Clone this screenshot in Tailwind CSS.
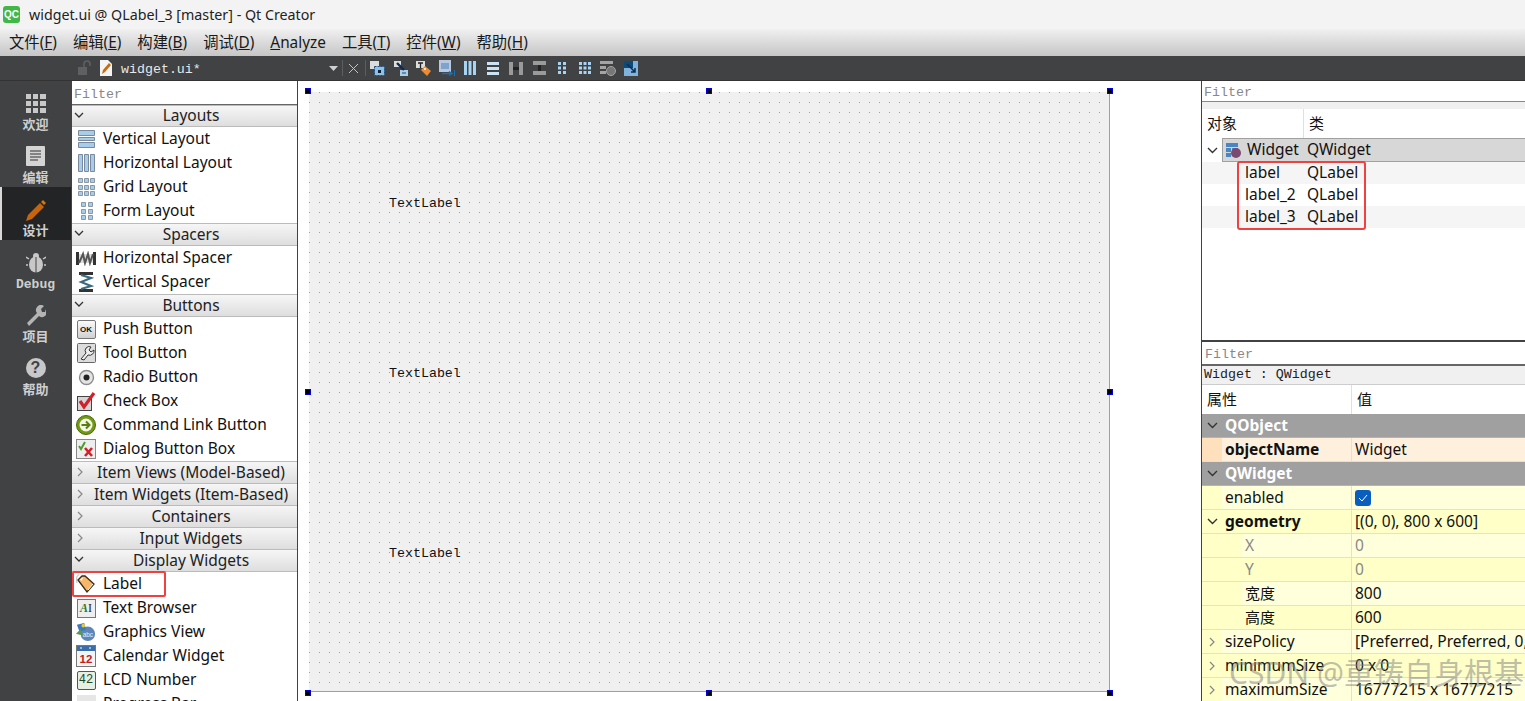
<!DOCTYPE html>
<html lang="zh-CN">
<head>
  <meta charset="UTF-8" />
  <title>widget.ui @ QLabel_3 [master] - Qt Creator</title>
  <script src="https://cdn.jsdelivr.net/npm/@tailwindcss/browser@4"></script>
</head>
<body class="h-[701px] overflow-hidden bg-white font-['Noto_Sans','Noto_Sans_CJK_SC',sans-serif] text-[15.5px] text-[#111]">

  <!-- Title bar -->
  <header class="h-[29px] bg-[#f3f3f3] flex items-center pl-[3px] gap-[9px] text-[14.25px] text-[#222]">
    <div class="w-[17px] h-[17px] rounded-[3px] bg-[#41b649] text-white text-[10px] font-bold leading-[17px] text-center font-['Liberation_Sans',sans-serif]">QC</div>
    <span>widget.ui @ QLabel_3 [master] - Qt Creator</span>
  </header>

  <!-- Menu -->
  <nav class="h-[27px] bg-gradient-to-b from-[#f0f0f0] to-[#c6c6c6] flex items-center pl-[1px] text-[15.35px] text-[#1a1a1a]">
    <span class="px-2">文件(<u>F</u>)</span>
    <span class="px-2">编辑(<u>E</u>)</span>
    <span class="px-2">构建(<u>B</u>)</span>
    <span class="px-2">调试(<u>D</u>)</span>
    <span class="px-2"><u>A</u>nalyze</span>
    <span class="px-2">工具(<u>T</u>)</span>
    <span class="px-2">控件(<u>W</u>)</span>
    <span class="px-2">帮助(<u>H</u>)</span>
  </nav>

  <!-- Editor toolbar -->
  <div class="h-[25px] bg-[#404244] flex items-center pl-[72px] border-b border-[#333]">
    <svg class="w-[14px] h-[16px] ml-[5px]" viewBox="0 0 14 16"><rect x="1" y="7" width="9" height="8" fill="#5e6062"/><path d="M7 7V4a3 3 0 0 1 6 0v2" fill="none" stroke="#5e6062" stroke-width="1.6"/></svg>
    <svg class="w-[14px] h-[18px] ml-[8px]" viewBox="0 0 14 18"><path d="M1 1h8l4 4v12H1z" fill="#f4f4f4"/><path d="M3 15l1-4 6-7 2 2-6 7z" fill="#c96a12"/></svg>
    <span class="ml-[8px] w-[208px] pt-[3px] font-['Liberation_Mono',monospace] text-[13.3px] text-[#e8e8e8]">widget.ui*</span>
    <svg class="w-[9px] h-[5px]" viewBox="0 0 9 5"><path d="M0 0h9L4.500 5z" fill="#d0d0d0"/></svg>
    <div class="w-px h-[16px] bg-[#5c5e60] ml-[4px]"></div>
    <svg class="w-[11px] h-[11px] ml-[5px]" viewBox="0 0 11 11"><path d="M1 1l9 9M10 1l-9 9" stroke="#c4c4c4" stroke-width="1"/></svg>
    <div class="w-px h-[16px] bg-[#5c5e60] ml-[6px]"></div>
    <svg class="w-[15px] h-[15px] ml-[4px]" viewBox="0 0 15 15"><rect x="0" y="0" width="9" height="8" fill="#dcdcdc"/><rect x="4.500" y="5.500" width="10" height="9" fill="#8fc0e8" stroke="#1c4d80" stroke-dasharray="2 1"/><rect x="8" y="9" width="3" height="3" fill="#123"/></svg>
    <svg class="w-[14px] h-[15px] ml-[9px]" viewBox="0 0 14 15"><rect x="0" y="0" width="7" height="6" fill="#dcdcdc"/><rect x="6" y="9" width="8" height="6" fill="#a9cdea"/><path d="M3 2l7 7" stroke="#0c2c55" stroke-width="2.400"/><path d="M8 12h4" stroke="#345"/></svg>
    <svg class="w-[15px] h-[15px] ml-[8px]" viewBox="0 0 15 15"><rect x="0" y="0" width="9" height="7" fill="#dcdcdc"/><path d="M2 2h5M4.500 2v5" stroke="#222" stroke-width="1.300"/><path d="M5 9l4-4 6 5-4 5z" fill="#f08a32"/><circle cx="9" cy="8" r="1" fill="#fff"/></svg>
    <svg class="w-[16px] h-[16px] ml-[8px]" viewBox="0 0 16 16"><rect x="0" y="0" width="12" height="12" fill="#b9c8dc"/><rect x="2" y="3" width="8" height="6" fill="#7ea3cc"/><path d="M3 13.500h9M10 11.500l3 2-3 2" stroke="#1d6fb5" stroke-width="1.400" fill="none"/><path d="M15.500 10v6" stroke="#1d6fb5"/></svg>
    <svg class="w-[12px] h-[14px] ml-[9px]" viewBox="0 0 12 14"><path d="M0 0h3v14H0zM4.500 0h3v14h-3zM9 0h3v14H9z" fill="#a8d4f4"/></svg>
    <svg class="w-[12px] h-[13px] ml-[11px]" viewBox="0 0 12 13"><path d="M0 0h12v3H0zM0 5h12v3H0zM0 10h12v3H0z" fill="#c9e2f5"/></svg>
    <svg class="w-[14px] h-[13px] ml-[10px]" viewBox="0 0 14 13"><path d="M0 0h4v13H0zM10 0h4v13h-4z" fill="#9a9a9a"/><path d="M4 6.500h6" stroke="#222" stroke-width="3"/></svg>
    <svg class="w-[13px] h-[14px] ml-[10px]" viewBox="0 0 13 14"><path d="M0 0h13v4H0zM0 10h13v4H0z" fill="#9a9a9a"/><path d="M6.500 4v6" stroke="#222" stroke-width="3"/></svg>
    <svg class="w-[8px] h-[12px] ml-[12px]" viewBox="0 0 8 12"><path d="M0 0h3v3H0zM5 0h3v3H5zM0 4.500h3v3H0zM5 4.500h3v3H5zM0 9h3v3H0zM5 9h3v3H5z" fill="#a8d4f4"/></svg>
    <svg class="w-[12px] h-[12px] ml-[13px]" viewBox="0 0 12 12"><path d="M0 0h3v3H0zM4.500 0h3v3h-3zM9 0h3v3H9zM0 4.500h3v3H0zM4.500 4.500h3v3h-3zM9 4.500h3v3H9zM0 9h3v3H0zM4.500 9h3v3h-3zM9 9h3v3H9z" fill="#a8d4f4"/></svg>
    <svg class="w-[16px] h-[16px] ml-[9px]" viewBox="0 0 16 16"><path d="M0 1h13v3H0zM0 6h6v3H0zM0 11h6v3H0z" fill="#a4a4a4"/><circle cx="11" cy="11" r="4.500" fill="#777" stroke="#a4a4a4"/></svg>
    <svg class="w-[14px] h-[15px] ml-[8px]" viewBox="0 0 14 15"><rect width="14" height="15" fill="#7fb2dc"/><rect width="9" height="7" fill="#0e4a78"/><path d="M3 3l8 8M11 7v4H7" stroke="#0b2c50" stroke-width="1.500" fill="none"/></svg>
  </div>

  <div class="flex h-[620px]">

    <!-- Mode selector -->
    <aside class="w-[71px] shrink-0 bg-[#404244] flex flex-col text-[#cfcfcf] text-[13px] font-bold leading-[16px] text-center">
      <div class="h-[53px] flex flex-col items-center justify-end pb-[2px]">
        <svg class="w-[20px] h-[19px] mb-[3px]" viewBox="0 0 20 19"><path d="M0 0h5v5H0zM7 0h5v5H7zM14 0h6v5h-6zM0 7h5v5H0zM7 7h5v5H7zM14 7h6v5h-6zM0 14h5v5H0zM7 14h5v5H7zM14 14h6v5h-6z" fill="#c8c8c8"/></svg>
        <span>欢迎</span>
      </div>
      <div class="h-[53px] flex flex-col items-center justify-end pb-[2px]">
        <svg class="w-[19px] h-[20px] mb-[3px]" viewBox="0 0 19 20"><rect width="19" height="20" rx="1" fill="#d4d4d4"/><path d="M4 5h11M4 8h11M4 11h11M4 14h8" stroke="#333"/></svg>
        <span>编辑</span>
      </div>
      <div class="h-[53px] bg-[#222425] border-l-2 border-[#d8d8d8] flex flex-col items-center justify-end pb-[2px] pr-[2px]">
        <svg class="w-[20px] h-[21px] mb-[1px]" viewBox="0 0 20 21"><path d="M0 21l2-6L14 3l4 4L6 19z" fill="#c8640a"/><path d="M15 2l2-2 3 3-2 2z" fill="#d4750f"/></svg>
        <span>设计</span>
      </div>
      <div class="h-[53px] flex flex-col items-center justify-end font-['Liberation_Mono',monospace] text-[13px]">
        <svg class="w-[20px] h-[20px] mb-[4px]" viewBox="0 0 20 20"><ellipse cx="10" cy="11.500" rx="7" ry="8" fill="#c8c8c8"/><circle cx="10" cy="3" r="3" fill="#c8c8c8"/><path d="M10 4v16" stroke="#404244"/><path d="M3 6L0 4M17 6l3-2M2 12H0M18 12h2" stroke="#c8c8c8" stroke-width="1.500"/></svg>
        <span>Debug</span>
      </div>
      <div class="h-[53px] flex flex-col items-center justify-end pb-[2px]">
        <svg class="w-[20px] h-[21px] mb-[2px]" viewBox="0 0 20 21"><path d="M1 18L11 8a5 5 0 0 1 7-7l-3 3 1 3 3 0 1-3a5 5 0 0 1-7 7L3 21z" fill="#b4b4b4"/></svg>
        <span>项目</span>
      </div>
      <div class="h-[53px] flex flex-col items-center justify-end pb-[2px]">
        <div class="w-[20px] h-[20px] rounded-full bg-[#c8c8c8] text-[#404244] text-[16px] leading-[20px] font-bold font-['Liberation_Sans',sans-serif] mb-[3px]">?</div>
        <span>帮助</span>
      </div>
    </aside>

    <!-- Widget box -->
    <section class="w-[227px] shrink-0 border-x border-[#404244] bg-white overflow-hidden">
      <div class="h-[23px] mt-[1px] pt-[3px] border-b border-[#666] pl-[2px] flex items-center font-['Liberation_Mono',monospace] text-[13.3px] text-[#888]">Filter</div>

      <div class="h-[22px] pl-[13px] border-y border-[#bbb] bg-gradient-to-b from-[#f6f6f6] to-[#dedede] flex items-center relative text-[#222] justify-center">
        <svg class="absolute left-[2px] top-[6px] w-[10px] h-[6px]" viewBox="0 0 10 6"><path d="M1 1l4 4 4-4" fill="none" stroke="#333" stroke-width="1.300"/></svg>Layouts</div>
      <div class="h-[24px] flex items-center pl-[4px]"><div class="w-[20px] mr-[7px] flex justify-center"><svg class="w-[19px] h-[20px]" viewBox="0 0 19 20"><path d="M1.500 1.500h16v5h-16zM1.500 8.500h16v3h-16zM1.500 13.500h16v5h-16z" fill="#a6cdec" stroke="#7a8a9c"/></svg></div>Vertical Layout</div>
      <div class="h-[24px] flex items-center pl-[4px]"><div class="w-[20px] mr-[7px] flex justify-center"><svg class="w-[19px] h-[20px]" viewBox="0 0 19 20"><path d="M1.500 1.500h4v17h-4zM7.500 1.500h4v17h-4zM13.500 1.500h4v17h-4z" fill="#a6cdec" stroke="#7a8a9c"/></svg></div>Horizontal Layout</div>
      <div class="h-[24px] flex items-center pl-[4px]"><div class="w-[20px] mr-[7px] flex justify-center"><svg class="w-[19px] h-[20px]" viewBox="0 0 19 20"><path d="M1.500 1.500h4v4h-4zM7.500 1.500h4v4h-4zM13.500 1.500h4v4h-4zM1.500 8.500h4v4h-4zM7.500 8.500h4v4h-4zM13.500 8.500h4v4h-4zM1.500 14.500h4v4h-4zM7.500 14.500h4v4h-4zM13.500 14.500h4v4h-4z" fill="#a6cdec" stroke="#8a97a6"/></svg></div>Grid Layout</div>
      <div class="h-[24px] flex items-center pl-[4px]"><div class="w-[20px] mr-[7px] flex justify-center"><svg class="w-[19px] h-[20px]" viewBox="0 0 19 20"><path d="M4.500 1.500h4v4h-4zM11.500 1.500h4v4h-4zM4.500 8.500h4v4h-4zM11.500 8.500h4v4h-4zM4.500 14.500h4v4h-4zM11.500 14.500h4v4h-4z" fill="#a6cdec" stroke="#8a97a6"/></svg></div>Form Layout</div>

      <div class="h-[23px] pl-[13px] border-y border-[#bbb] bg-gradient-to-b from-[#f6f6f6] to-[#dedede] flex items-center relative text-[#222] justify-center">
        <svg class="absolute left-[2px] top-[6px] w-[10px] h-[6px]" viewBox="0 0 10 6"><path d="M1 1l4 4 4-4" fill="none" stroke="#333" stroke-width="1.300"/></svg>Spacers</div>
      <div class="h-[24px] flex items-center pl-[4px]"><div class="w-[20px] mr-[7px] flex justify-center"><svg class="w-[20px] h-[15px]" viewBox="0 0 20 15"><path d="M0 1h3v13H0zM17 1h3v13h-3z" fill="#333"/><path d="M3 3h14v9H3z" fill="#ddd"/><path d="M3 12L7 3l2 9 3-9 2 9 3-9" fill="none" stroke="#555" stroke-width="2"/></svg></div>Horizontal Spacer</div>
      <div class="h-[24px] flex items-center pl-[4px]"><div class="w-[20px] mr-[7px] flex justify-center"><svg class="w-[16px] h-[20px]" viewBox="0 0 16 20"><path d="M1 0h14v3H1zM1 17h14v3H1z" fill="#333"/><path d="M3 3l10 3-10 4 10 4-10 3" fill="none" stroke="#3a6a80" stroke-width="2"/></svg></div>Vertical Spacer</div>

      <div class="h-[23px] pl-[13px] border-y border-[#bbb] bg-gradient-to-b from-[#f6f6f6] to-[#dedede] flex items-center relative text-[#222] justify-center">
        <svg class="absolute left-[2px] top-[6px] w-[10px] h-[6px]" viewBox="0 0 10 6"><path d="M1 1l4 4 4-4" fill="none" stroke="#333" stroke-width="1.300"/></svg>Buttons</div>
      <div class="h-[24px] flex items-center pl-[4px]"><div class="w-[20px] mr-[7px] flex justify-center"><div class="w-[19px] h-[19px] rounded-[2px] bg-gradient-to-b from-[#fafafa] to-[#d0d0d0] border border-[#777] text-[8px] font-bold text-center leading-[17px] font-['Liberation_Sans',sans-serif]">OK</div></div>Push Button</div>
      <div class="h-[24px] flex items-center pl-[4px]"><div class="w-[20px] mr-[7px] flex justify-center"><svg class="w-[19px] h-[20px]" viewBox="0 0 19 20"><rect x="0.500" y="0.500" width="18" height="19" rx="1" fill="#dcdcdc" stroke="#666"/><path d="M4 16l5-6a4 4 0 0 1 5-6l-2 3 2 2 3-2a4.500 4.500 0 0 1-6 5l-4 5z" fill="#eee" stroke="#333" stroke-width="1"/></svg></div>Tool Button</div>
      <div class="h-[24px] flex items-center pl-[4px]"><div class="w-[20px] mr-[7px] flex justify-center"><svg class="w-[19px] h-[19px]" viewBox="0 0 19 19"><circle cx="9.500" cy="9.500" r="7" fill="#e4e4e4" stroke="#8c8c8c" stroke-width="1.400"/><circle cx="9.500" cy="9.500" r="3" fill="#222"/></svg></div>Radio Button</div>
      <div class="h-[24px] flex items-center pl-[4px]"><div class="w-[20px] mr-[7px] flex justify-center"><svg class="w-[20px] h-[19px]" viewBox="0 0 20 19"><rect x="1.500" y="4.500" width="14" height="14" fill="#d6d6d6" stroke="#444"/><path d="M4 9l4 6L18 1" fill="none" stroke="#d3202a" stroke-width="3.200"/></svg></div>Check Box</div>
      <div class="h-[24px] flex items-center pl-[4px]"><div class="w-[20px] mr-[7px] flex justify-center"><svg class="w-[20px] h-[20px]" viewBox="0 0 20 20"><circle cx="10" cy="10" r="9.500" fill="#6f9a12" stroke="#4c6a08"/><circle cx="10" cy="10" r="6.500" fill="#f4f4e8"/><path d="M5.500 10h8M10 6.500l3.500 3.500-3.500 3.500" fill="none" stroke="#5a7d0c" stroke-width="2"/></svg></div>Command Link Button</div>
      <div class="h-[24px] flex items-center pl-[4px]"><div class="w-[20px] mr-[7px] flex justify-center"><svg class="w-[20px] h-[20px]" viewBox="0 0 20 20"><rect x="0.500" y="0.500" width="19" height="19" fill="#eee" stroke="#888"/><path d="M3 7l2 3 4-7" fill="none" stroke="#4aa02c" stroke-width="2"/><path d="M9 9l7 8M16 9l-7 8" stroke="#d3202a" stroke-width="2.600"/></svg></div>Dialog Button Box</div>

      <div class="h-[22px] pl-[13px] border-t border-[#bbb] bg-gradient-to-b from-[#f6f6f6] to-[#dedede] flex items-center relative text-[#222] justify-center">
        <svg class="absolute left-[5px] top-[5px] w-[6px] h-[10px]" viewBox="0 0 6 10"><path d="M1 1l4 4-4 4" fill="none" stroke="#888" stroke-width="1.200"/></svg>Item Views (Model-Based)</div>
      <div class="h-[22px] pl-[13px] border-t border-[#bbb] bg-gradient-to-b from-[#f6f6f6] to-[#dedede] flex items-center relative text-[#222] justify-center">
        <svg class="absolute left-[5px] top-[5px] w-[6px] h-[10px]" viewBox="0 0 6 10"><path d="M1 1l4 4-4 4" fill="none" stroke="#888" stroke-width="1.200"/></svg>Item Widgets (Item-Based)</div>
      <div class="h-[22px] pl-[13px] border-t border-[#bbb] bg-gradient-to-b from-[#f6f6f6] to-[#dedede] flex items-center relative text-[#222] justify-center">
        <svg class="absolute left-[5px] top-[5px] w-[6px] h-[10px]" viewBox="0 0 6 10"><path d="M1 1l4 4-4 4" fill="none" stroke="#888" stroke-width="1.200"/></svg>Containers</div>
      <div class="h-[22px] pl-[13px] border-t border-[#bbb] bg-gradient-to-b from-[#f6f6f6] to-[#dedede] flex items-center relative text-[#222] justify-center">
        <svg class="absolute left-[5px] top-[5px] w-[6px] h-[10px]" viewBox="0 0 6 10"><path d="M1 1l4 4-4 4" fill="none" stroke="#888" stroke-width="1.200"/></svg>Input Widgets</div>
      <div class="h-[23px] pl-[13px] border-y border-[#bbb] bg-gradient-to-b from-[#f6f6f6] to-[#dedede] flex items-center relative text-[#222] justify-center">
        <svg class="absolute left-[2px] top-[6px] w-[10px] h-[6px]" viewBox="0 0 10 6"><path d="M1 1l4 4 4-4" fill="none" stroke="#333" stroke-width="1.300"/></svg>Display Widgets</div>

      <div class="h-[24px] flex items-center pl-[4px] relative">
        <div class="w-[20px] mr-[7px] flex justify-center"><svg class="w-[20px] h-[20px]" viewBox="0 0 20 20"><path d="M1 9C0 4 1 1 3 1" fill="none" stroke="#999" stroke-width="0.700"/><path d="M2 6l4-4h3l9 8-7 8z" fill="#f7b768" stroke="#3a2a18" stroke-width="1.300"/><path d="M4.500 6.200L7 3.500" stroke="#fff" stroke-width="1"/><path d="M12 16l5-6" stroke="#fff" stroke-width="1"/><circle cx="5.500" cy="5.500" r="1" fill="#fff"/></svg></div>Label
        <div class="absolute left-0 top-[-1px] w-[94px] h-[26px] border-2 border-[#f04040] rounded-[2px]"></div>
      </div>
      <div class="h-[24px] flex items-center pl-[4px]"><div class="w-[20px] mr-[7px] flex justify-center"><div class="w-[19px] h-[19px] bg-[#eeeeee] border border-[#777] text-[12px] text-center leading-[17px] font-['Liberation_Serif',serif] text-[#222]"><span class="text-[#2c7a2c] italic font-bold">A</span>I</div></div>Text Browser</div>
      <div class="h-[24px] flex items-center pl-[4px]"><div class="w-[20px] mr-[7px] flex justify-center"><svg class="w-[22px] h-[20px]" viewBox="0 0 22 20"><circle cx="13" cy="12" r="8" fill="#5f86b8"/><path d="M1 2l8-2 2 7-7 3z" fill="#3f78c0"/><circle cx="8" cy="3" r="2" fill="#e6cc3a"/><path d="M0 12l5-5 3 7z" fill="#5a9a50"/><text x="13" y="16" text-anchor="middle" font-size="7" fill="#e8eef6" font-family="Liberation Sans">abc</text></svg></div>Graphics View</div>
      <div class="h-[24px] flex items-center pl-[4px]"><div class="w-[20px] mr-[7px] flex justify-center"><svg class="w-[20px] h-[22px]" viewBox="0 0 20 22"><rect x="0.500" y="0.500" width="19" height="21" fill="#f4f4f4" stroke="#777"/><rect x="1" y="1" width="18" height="5" fill="#3a6ea8"/><rect x="4" y="2.500" width="2" height="1" fill="#fff"/><rect x="13" y="2.500" width="2" height="1" fill="#fff"/><text x="10" y="18" text-anchor="middle" font-size="11.500" font-weight="700" fill="#c02020" font-family="Liberation Sans">12</text></svg></div>Calendar Widget</div>
      <div class="h-[24px] flex items-center pl-[4px]"><div class="w-[20px] mr-[7px] flex justify-center"><div class="w-[19px] h-[19px] rounded-[2px] bg-[#e6efe2] border border-[#555] text-[#164a2a] text-[12px] text-center leading-[17px] font-['Liberation_Mono',monospace]">42</div></div>LCD Number</div>
      <div class="h-[24px] flex items-center pl-[4px]"><div class="w-[20px] mr-[7px] flex justify-center"><div class="w-[19px] h-[19px] bg-[#e6e6e6]"></div></div>Progress Bar</div>
    </section>

    <!-- Form canvas -->
    <main class="w-[903px] shrink-0 bg-white relative">
      <div class="absolute left-[11px] top-[11px] w-[801px] h-[600px] bg-[#f0f0f0] border-b border-r border-[#a0a0a0] font-['Liberation_Mono',monospace] text-[13.3px] text-[#111]">
        <svg class="absolute inset-0 w-full h-full"><defs><pattern id="grid" width="10" height="10" patternUnits="userSpaceOnUse"><rect width="1" height="1" fill="#a0a0a0"/></pattern></defs><rect width="100%" height="100%" fill="url(#grid)"/></svg>
        <span class="absolute left-[80px] top-[102px]">TextLabel</span>
        <span class="absolute left-[80px] top-[272px]">TextLabel</span>
        <span class="absolute left-[80px] top-[452px]">TextLabel</span>
      </div>
      <div class="absolute left-[7px] top-[7px] w-[6px] h-[6px] bg-black border border-[#0000e0]"></div>
      <div class="absolute left-[408px] top-[7px] w-[6px] h-[6px] bg-black border border-[#0000e0]"></div>
      <div class="absolute left-[809px] top-[7px] w-[6px] h-[6px] bg-black border border-[#0000e0]"></div>
      <div class="absolute left-[7px] top-[308px] w-[6px] h-[6px] bg-black border border-[#0000e0]"></div>
      <div class="absolute left-[809px] top-[308px] w-[6px] h-[6px] bg-black border border-[#0000e0]"></div>
      <div class="absolute left-[7px] top-[609px] w-[6px] h-[6px] bg-black border border-[#0000e0]"></div>
      <div class="absolute left-[408px] top-[609px] w-[6px] h-[6px] bg-black border border-[#0000e0]"></div>
      <div class="absolute left-[809px] top-[609px] w-[6px] h-[6px] bg-black border border-[#0000e0]"></div>
    </main>

    <!-- Object inspector and property editor -->
    <section class="flex-1 min-w-0 border-l border-[#404244] flex flex-col relative overflow-hidden">
      <div class="h-[259px] shrink-0 flex flex-col">
        <div class="h-[21px] pt-[4px] border-b border-[#888] pl-[2px] flex items-center font-['Liberation_Mono',monospace] text-[13.3px] text-[#888]">Filter</div>
        <div class="h-[7px] bg-[#f0f0f0]"></div>
        <div class="h-[29px] flex items-center text-[15px]">
          <div class="w-[102px] h-full flex items-center pl-[5px] border-r border-[#e0e0e0]">对象</div>
          <div class="pl-[5px]">类</div>
        </div>
        <div class="h-[24px] flex items-center">
          <svg class="ml-[5px] w-[11px] h-[7px]" viewBox="0 0 11 7"><path d="M1 1l4.500 4.500L10 1" fill="none" stroke="#333" stroke-width="1.400"/></svg>
          <div class="ml-[4px] flex-1 h-full bg-[#d7d7d7] border border-r-0 border-[#a0a0a0] flex items-center pl-[2px]">
            <svg class="w-[17px] h-[17px]" viewBox="0 0 17 17"><path d="M1 1h12v4H1zM1 6h5v4H1zM7 6h6v4H7zM1 11h5v4H1z" fill="#4a86c4"/><circle cx="11" cy="11" r="5" fill="#7a4a70"/></svg>
            <span class="ml-[5px] w-[60px]">Widget</span><span>QWidget</span>
          </div>
        </div>
        <div class="h-[22px] bg-[#f5f5f5] flex items-center"><span class="ml-[43px] w-[62px]">label</span><span>QLabel</span></div>
        <div class="h-[22px] flex items-center"><span class="ml-[43px] w-[62px]">label_2</span><span>QLabel</span></div>
        <div class="h-[22px] bg-[#f5f5f5] flex items-center"><span class="ml-[43px] w-[62px]">label_3</span><span>QLabel</span></div>
        <div class="absolute left-[35px] top-[80px] w-[129px] h-[69px] border-2 border-[#f04040] rounded-[3px]"></div>
      </div>
      <div class="h-[2px] shrink-0 bg-[#404244]"></div>
      <div class="h-[24px] shrink-0 pt-[3px] border-b-2 border-[#666] pl-[3px] flex items-center font-['Liberation_Mono',monospace] text-[13.3px] text-[#888]">Filter</div>
      <div class="h-[19px] shrink-0 bg-[#f0f0f0] border-b border-[#ccc] pl-[2px] flex items-center font-['Liberation_Mono',monospace] text-[13.3px] text-[#222]">Widget : QWidget</div>
      <div class="h-[29px] shrink-0 flex items-center text-[15px]">
        <div class="w-[150px] h-full flex items-center pl-[5px] border-r border-[#e0e0e0]">属性</div>
        <div class="pl-[5px]">值</div>
      </div>

      <div class="h-[24px] shrink-0 bg-[#a0a0a0] border-b border-[#b4b4b4] flex items-center text-white font-bold">
        <svg class="ml-[5px] w-[11px] h-[7px]" viewBox="0 0 11 7"><path d="M1 1l4.500 4.500L10 1" fill="none" stroke="#333" stroke-width="1.400"/></svg>
        <span class="ml-[7px]">QObject</span>
      </div>
      <div class="h-[24px] shrink-0 flex border-b border-[#e0e0e0]">
        <div class="w-[20px] shrink-0 bg-[#fee0bc]"></div>
        <div class="w-[130px] shrink-0 bg-[#fff0de] border-r border-[#e0e0e0] pl-[3px] font-bold flex items-center">objectName</div>
        <div class="flex-1 bg-[#fff0de] pl-[3px] flex items-center">Widget</div>
      </div>
      <div class="h-[24px] shrink-0 bg-[#a0a0a0] border-b border-[#b4b4b4] flex items-center text-white font-bold">
        <svg class="ml-[5px] w-[11px] h-[7px]" viewBox="0 0 11 7"><path d="M1 1l4.500 4.500L10 1" fill="none" stroke="#333" stroke-width="1.400"/></svg>
        <span class="ml-[7px]">QWidget</span>
      </div>
      <div class="h-[24px] shrink-0 flex border-b border-[#e0e0e0]">
        <div class="w-[20px] shrink-0 bg-[#ffffc8]"></div>
        <div class="w-[130px] shrink-0 bg-[#ffffdc] border-r border-[#e0e0e0] pl-[3px] flex items-center">enabled</div>
        <div class="flex-1 bg-[#ffffdc] pl-[3px] flex items-center"><div class="w-[16px] h-[16px] rounded-[3px] bg-[#0a5fbe] flex items-center justify-center"><svg class="w-[10px] h-[8px]" viewBox="0 0 10 8"><path d="M1 4l3 3 5-6" fill="none" stroke="#fff" stroke-width="1"/></svg></div></div>
      </div>
      <div class="h-[24px] shrink-0 flex border-b border-[#e0e0e0]">
        <div class="w-[20px] shrink-0 bg-[#ffffc8] flex items-center justify-center"><svg class="w-[11px] h-[7px]" viewBox="0 0 11 7"><path d="M1 1l4.500 4.500L10 1" fill="none" stroke="#333" stroke-width="1.400"/></svg></div>
        <div class="w-[130px] shrink-0 bg-[#ffffc8] border-r border-[#e0e0e0] pl-[3px] font-bold flex items-center">geometry</div>
        <div class="flex-1 bg-[#ffffc8] pl-[3px] flex items-center">[(0, 0), 800 x 600]</div>
      </div>
      <div class="h-[24px] shrink-0 flex border-b border-[#e0e0e0] text-[#888]">
        <div class="w-[40px] shrink-0 bg-[#ffffc8]"></div>
        <div class="w-[110px] shrink-0 bg-[#ffffdc] border-r border-[#e0e0e0] pl-[3px] flex items-center">X</div>
        <div class="flex-1 bg-[#ffffdc] pl-[3px] flex items-center">0</div>
      </div>
      <div class="h-[24px] shrink-0 flex border-b border-[#e0e0e0] text-[#888]">
        <div class="w-[40px] shrink-0 bg-[#ffffc8]"></div>
        <div class="w-[110px] shrink-0 bg-[#ffffc8] border-r border-[#e0e0e0] pl-[3px] flex items-center">Y</div>
        <div class="flex-1 bg-[#ffffc8] pl-[3px] flex items-center">0</div>
      </div>
      <div class="h-[24px] shrink-0 flex border-b border-[#e0e0e0]">
        <div class="w-[40px] shrink-0 bg-[#ffffc8]"></div>
        <div class="w-[110px] shrink-0 bg-[#ffffdc] border-r border-[#e0e0e0] pl-[3px] flex items-center text-[15px]">宽度</div>
        <div class="flex-1 bg-[#ffffdc] pl-[3px] flex items-center">800</div>
      </div>
      <div class="h-[24px] shrink-0 flex border-b border-[#e0e0e0]">
        <div class="w-[40px] shrink-0 bg-[#ffffc8]"></div>
        <div class="w-[110px] shrink-0 bg-[#ffffc8] border-r border-[#e0e0e0] pl-[3px] flex items-center text-[15px]">高度</div>
        <div class="flex-1 bg-[#ffffc8] pl-[3px] flex items-center">600</div>
      </div>
      <div class="h-[24px] shrink-0 flex border-b border-[#e0e0e0]">
        <div class="w-[20px] shrink-0 bg-[#ffffc8] flex items-center justify-center"><svg class="w-[6px] h-[10px]" viewBox="0 0 6 10"><path d="M1 1l4 4-4 4" fill="none" stroke="#888" stroke-width="1.200"/></svg></div>
        <div class="w-[130px] shrink-0 bg-[#ffffdc] border-r border-[#e0e0e0] pl-[3px] flex items-center">sizePolicy</div>
        <div class="flex-1 min-w-0 overflow-hidden bg-[#ffffdc] pl-[3px] flex items-center whitespace-nowrap">[Preferred, Preferred, 0, 0]</div>
      </div>
      <div class="h-[24px] shrink-0 flex border-b border-[#e0e0e0]">
        <div class="w-[20px] shrink-0 bg-[#ffffc8] flex items-center justify-center"><svg class="w-[6px] h-[10px]" viewBox="0 0 6 10"><path d="M1 1l4 4-4 4" fill="none" stroke="#888" stroke-width="1.200"/></svg></div>
        <div class="w-[130px] shrink-0 bg-[#ffffc8] border-r border-[#e0e0e0] pl-[3px] flex items-center">minimumSize</div>
        <div class="flex-1 bg-[#ffffc8] pl-[3px] flex items-center">0 x 0</div>
      </div>
      <div class="h-[24px] shrink-0 flex border-b border-[#e0e0e0]">
        <div class="w-[20px] shrink-0 bg-[#ffffc8] flex items-center justify-center"><svg class="w-[6px] h-[10px]" viewBox="0 0 6 10"><path d="M1 1l4 4-4 4" fill="none" stroke="#888" stroke-width="1.200"/></svg></div>
        <div class="w-[130px] shrink-0 bg-[#ffffdc] border-r border-[#e0e0e0] pl-[3px] flex items-center">maximumSize</div>
        <div class="flex-1 bg-[#ffffdc] pl-[3px] flex items-center">16777215 x 16777215</div>
      </div>

      <!-- CSDN watermark -->
      <div class="absolute left-[27px] top-[576px] text-[30px] leading-[32px] text-[#808080]/50 whitespace-nowrap">CSDN @重铸自身根基</div>
    </section>
  </div>
</body>
</html>
